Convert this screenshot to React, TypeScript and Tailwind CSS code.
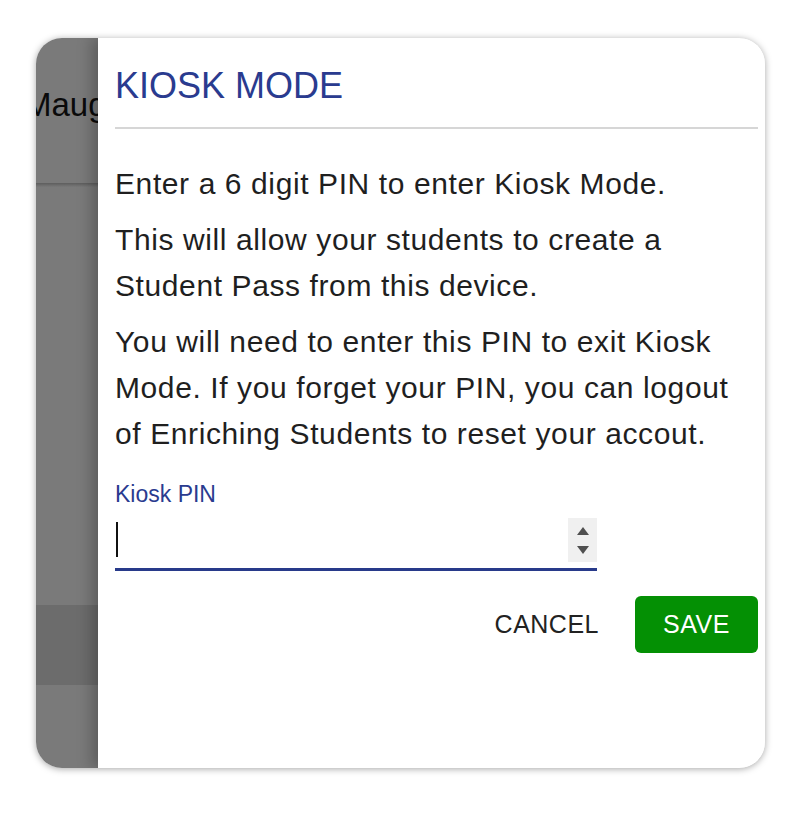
import React from "react";

const font = { fontFamily: '"Liberation Sans", Arial, Helvetica, sans-serif' };

function Spinner() {
  return (
    <div className="flex h-[44px] w-[29px] flex-col items-center justify-center gap-[11px] bg-[#f0f0f0]">
      <svg width="12" height="8" viewBox="0 0 12 8">
        <path d="M6 0 L12 8 L0 8 Z" fill="#505050" />
      </svg>
      <svg width="12" height="8" viewBox="0 0 12 8">
        <path d="M0 0 L12 0 L6 8 Z" fill="#505050" />
      </svg>
    </div>
  );
}

export default function App() {
  return (
    <div className="h-[815px] w-[800px] bg-white pl-[36px] pt-[38px]" style={font}>
      <div className="flex h-[730px] w-[729px] overflow-hidden rounded-[26px] shadow-[0_1px_7px_rgba(0,0,0,0.35)]">
        {/* page behind the dialog, dimmed */}
        <div className="flex w-[62px] shrink-0 flex-col overflow-hidden bg-[#7a7a7a]">
          <div className="flex h-[145px] items-start pt-[48px]">
            <span className="ml-[-12px] whitespace-nowrap text-[33px] leading-[38px] text-[#0a0a0a]">Maug</span>
          </div>
          <div className="h-[4px] bg-gradient-to-b from-[#5e5e5e] to-[#797979]" />
          <div className="h-[418px]" />
          <div className="h-[80px] bg-[#6c6c6c]" />
          <div className="flex-1" />
        </div>

        {/* dialog */}
        <div className="relative z-10 flex flex-1 flex-col bg-white pl-[17px] pr-[7px] pt-[27px] shadow-[-6px_0_14px_rgba(0,0,0,0.25)]">
          <h2 className="text-[36px] leading-[41px] text-[#2a3b8f]">KIOSK MODE</h2>
          <div className="mt-[21px] h-[2px] bg-[#d6d6d6]" />

          <div className="mt-[32px] w-[630px] text-[30px] leading-[46px] tracking-[0.6px] text-[#1f1f1f]">
            <p className="mb-[10px]">Enter a 6 digit PIN to enter Kiosk Mode.</p>
            <p className="mb-[10px]">This will allow your students to create a Student Pass from this device.</p>
            <p>
              You will need to enter this PIN to exit Kiosk Mode. If you forget your PIN, you can logout of
              Enriching Students to reset your accout.
            </p>
          </div>

          <label className="mt-[24px] text-[23px] leading-[27px] text-[#2a3b8f]">Kiosk PIN</label>
          <div className="flex h-[63px] w-[482px] items-start justify-between border-b-[3px] border-[#283a8a] pt-[10px]">
            <div className="ml-[1px] mt-[4px] h-[35px] w-[2px] bg-[#111]" />
            <Spinner />
          </div>

          <div className="mt-[25px] flex items-center justify-end gap-[36px]">
            <button className="text-[25px] tracking-[0.5px] text-[#222]">CANCEL</button>
            <button className="h-[57px] w-[123px] rounded-[6px] bg-[#049004] text-[25px] tracking-[0.5px] text-white">
              SAVE
            </button>
          </div>
        </div>
      </div>
    </div>
  );
}
